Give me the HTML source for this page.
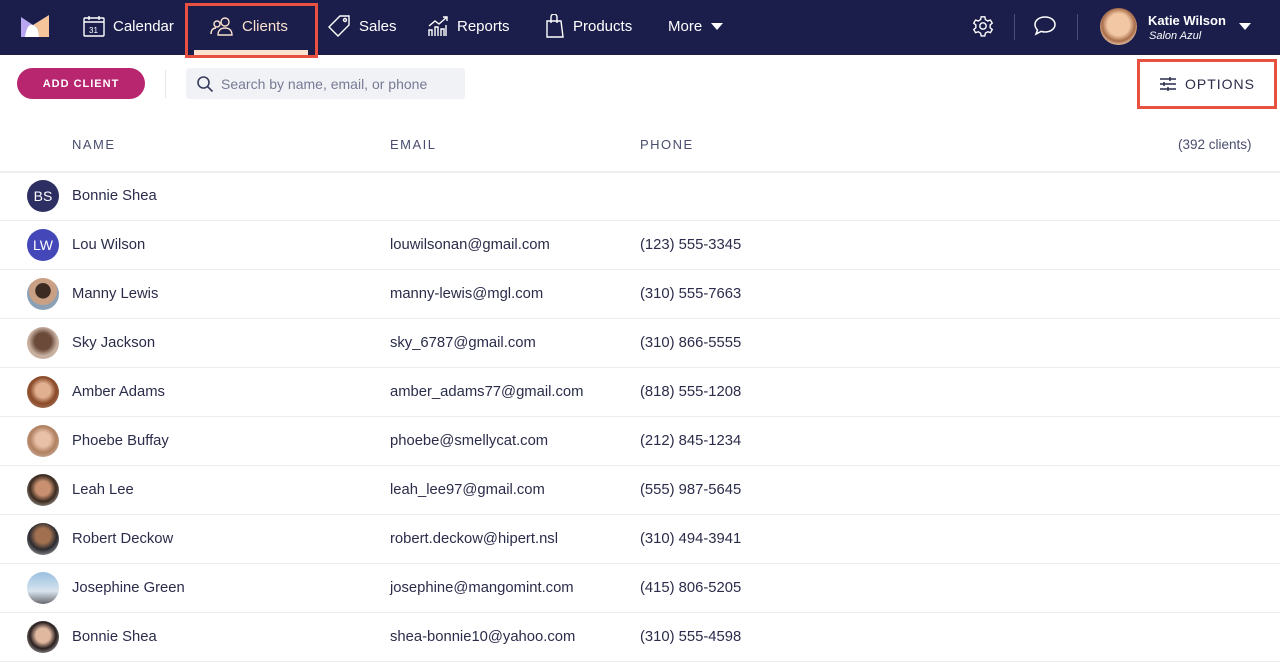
<!DOCTYPE html>
<html><head><meta charset="utf-8"><style>
*{box-sizing:border-box;margin:0;padding:0}
body{width:1280px;height:648px;overflow:hidden;background:#fff;font-family:"Liberation Sans",sans-serif;color:#2a2c4a;position:relative}
.nav{position:absolute;left:0;top:0;width:1280px;height:55px;background:#1b1e4b;color:#fff}
.ni{position:absolute;top:0;height:52px;display:flex;align-items:center;font-size:15px;color:#fff}
.ni svg{margin-right:8px}
.hl{position:absolute;left:185px;top:3px;width:133px;height:55px;border:3px solid #e8503f;z-index:3}
.ul{position:absolute;left:194px;top:50px;width:114px;height:5px;background:#fbe2cf}
.tb{position:absolute;top:68px}
.btn{left:17px;width:128px;height:31px;border-radius:16px;background:#b8266f;color:#fff;font-size:11px;font-weight:bold;letter-spacing:1px;display:flex;align-items:center;justify-content:center}
.search{left:186px;width:279px;height:31px;background:#f1f2f6;border-radius:3px;display:flex;align-items:center;padding-left:10px;font-size:14px;color:#777a94}
.opt{position:absolute;left:1137px;top:59px;width:140px;height:50px;border:3px solid #e8503f;display:flex;align-items:center;justify-content:center;font-size:14px;letter-spacing:1px;color:#2a2c4a}
.th{position:absolute;top:137px;font-size:13px;letter-spacing:1.5px;color:#4a4d6e}
.hr{position:absolute;left:0;top:171px;width:1280px;height:2px;background:#eeeef0}
.row{position:absolute;left:0;width:1280px;height:49px;border-bottom:1px solid #ececef;font-size:14.8px}
.row div{position:absolute;top:0;line-height:48px}
.av{position:absolute;left:27px;top:8px;width:32px;height:32px;border-radius:50%;color:#fff;font-size:14px;display:flex;align-items:center;justify-content:center}
</style></head><body>
<div class="nav">
 <div class="ni" style="left:21px"><svg width="28" height="22" viewBox="0 0 28 22"><path d="M0 2 L12 10 L12 22 L0 22Z" fill="#b9a6f0"/><path d="M12 10 L28 0 L28 22 L18 22 Q18 12 12 10Z" fill="#f6c49a"/><path d="M4 22 Q6 8 12 10 Q18 12 18 22Z" fill="#fff"/></svg></div>
 <div class="ni" style="left:83px"><svg width="22" height="22" viewBox="0 0 22 22" fill="none" stroke="#fff" stroke-width="1.4"><rect x="1" y="3" width="20" height="18" rx="1"/><path d="M1 7h20M6 1v4M16 1v4"/><text x="6" y="18" font-size="8" fill="#fff" stroke="none">31</text></svg>Calendar</div>
 <div class="ni" style="left:210px;color:#fbe2cf"><svg width="24" height="20" viewBox="0 0 24 20" fill="none" stroke="#fbe2cf" stroke-width="1.4"><circle cx="15" cy="6" r="4"/><path d="M8 19c0-5 3-7 7-7s7 2 7 7z"/><circle cx="7" cy="8" r="3"/><path d="M1 18c0-4 2-6 5-6"/></svg>Clients</div>
 <div class="ni" style="left:327px"><svg width="24" height="22" viewBox="0 0 24 22" fill="none" stroke="#fff" stroke-width="1.4"><path d="M13 1h9v9L11 21 2 12z"/><circle cx="18" cy="5" r="1.5"/></svg>Sales</div>
 <div class="ni" style="left:427px"><svg width="22" height="22" viewBox="0 0 22 22" fill="none" stroke="#fff" stroke-width="1.4"><path d="M2 21v-6h3v6M8 21v-9h3v9M14 21v-7h3v7M19 21v-11"/><path d="M2 11l6-5 4 3 8-7M16 2h4v4"/></svg>Reports</div>
 <div class="ni" style="left:545px"><svg width="20" height="24" viewBox="0 0 20 24" fill="none" stroke="#fff" stroke-width="1.4"><path d="M2 7h14l2 16H2z"/><path d="M6 9V3a3 3 0 0 1 6 0v6"/></svg>Products</div>
 <div class="ni" style="left:668px">More <span style="margin-left:9px;border-left:6px solid transparent;border-right:6px solid transparent;border-top:7px solid #fff"></span></div>
 <div class="ni" style="left:972px"><svg width="22" height="22" viewBox="0 0 24 24" fill="none" stroke="#fff" stroke-width="1.5"><circle cx="12" cy="12" r="3.5"/><path d="M10 2h4l.6 3 2.6 1.5 2.9-1 2 3.4-2.3 2v3l2.3 2-2 3.4-2.9-1-2.6 1.5-.6 3h-4l-.6-3-2.6-1.5-2.9 1-2-3.4 2.3-2v-3l-2.3-2 2-3.4 2.9 1L9.4 5z"/></svg></div>
 <div style="position:absolute;left:1014px;top:14px;width:1px;height:26px;background:#4a4d75"></div>
 <div class="ni" style="left:1033px"><svg width="24" height="22" viewBox="0 0 24 22" fill="none" stroke="#fff" stroke-width="1.5"><path d="M12 2c6 0 10 3.5 10 7.5S18 17 12 17c-1.5 0-3-.3-4-.6L3 19l1.5-4C3 13.5 2 11.5 2 9.5 2 5.5 6 2 12 2z"/></svg></div>
 <div style="position:absolute;left:1077px;top:14px;width:1px;height:26px;background:#4a4d75"></div>
 <div style="position:absolute;left:1100px;top:8px;width:37px;height:37px;border-radius:50%;background:radial-gradient(circle at 50% 45%,#f2c7a4 0 40%,#a86d4a 60%,#e9c3a6 75%)"></div>
 <div style="position:absolute;left:1148px;top:13px;font-size:13px;font-weight:bold">Katie Wilson</div>
 <div style="position:absolute;left:1149px;top:30px;font-size:11px;font-style:italic">Salon Azul</div>
 <div style="position:absolute;left:1239px;top:23px;border-left:6px solid transparent;border-right:6px solid transparent;border-top:7px solid #fff"></div>
</div>
<div class="ul"></div><div class="hl"></div>
<div class="tb btn">ADD CLIENT</div>
<div style="position:absolute;left:165px;top:70px;width:1px;height:28px;background:#e5e5ea"></div>
<div class="tb search"><svg width="18" height="18" viewBox="0 0 18 18" fill="none" stroke="#3a3d5c" stroke-width="1.6" style="margin-right:7px"><circle cx="7.5" cy="7.5" r="5.5"/><path d="M11.5 11.5l5 5"/></svg>Search by name, email, or phone</div>
<div class="opt"><svg width="18" height="16" viewBox="0 0 18 16" fill="none" stroke="#2a2c4a" stroke-width="1.5" style="margin-right:8px"><path d="M1 3h16M1 8h16M1 13h16"/><path d="M11 1v4M5 6v4M9 11v4"/></svg>OPTIONS</div>
<div class="th" style="left:72px">NAME</div>
<div class="th" style="left:390px">EMAIL</div>
<div class="th" style="left:640px">PHONE</div>
<div class="th" style="left:1178px;letter-spacing:0;font-size:13.5px">(392 clients)</div>
<div class="hr"></div>
<div class="row" style="top:172px"><span class="av" style="background:#2d2f62">BS</span><div style="left:72px">Bonnie Shea</div></div>
<div class="row" style="top:221px"><span class="av" style="background:#4347b8">LW</span><div style="left:72px">Lou Wilson</div><div style="left:390px">louwilsonan@gmail.com</div><div style="left:640px">(123) 555-3345</div></div>
<div class="row" style="top:270px"><span class="av" style="background:radial-gradient(circle at 50% 40%,#3b2a22 0 30%,#c9a084 32% 55%,#8ba0b5 58%)"></span><div style="left:72px">Manny Lewis</div><div style="left:390px">manny-lewis@mgl.com</div><div style="left:640px">(310) 555-7663</div></div>
<div class="row" style="top:319px"><span class="av" style="background:radial-gradient(circle at 50% 45%,#6b4a3a 0 35%,#c8b0a0 60%)"></span><div style="left:72px">Sky Jackson</div><div style="left:390px">sky_6787@gmail.com</div><div style="left:640px">(310) 866-5555</div></div>
<div class="row" style="top:368px"><span class="av" style="background:radial-gradient(circle at 50% 45%,#e0b090 0 30%,#8a4a2a 55%,#b08a70)"></span><div style="left:72px">Amber Adams</div><div style="left:390px">amber_adams77@gmail.com</div><div style="left:640px">(818) 555-1208</div></div>
<div class="row" style="top:417px"><span class="av" style="background:radial-gradient(circle at 50% 45%,#e8c0a8 0 30%,#b08060 55%,#d8c8c0)"></span><div style="left:72px">Phoebe Buffay</div><div style="left:390px">phoebe@smellycat.com</div><div style="left:640px">(212) 845-1234</div></div>
<div class="row" style="top:466px"><span class="av" style="background:radial-gradient(circle at 50% 45%,#c89070 0 30%,#3a2a20 55%,#e0e0d8)"></span><div style="left:72px">Leah Lee</div><div style="left:390px">leah_lee97@gmail.com</div><div style="left:640px">(555) 987-5645</div></div>
<div class="row" style="top:515px"><span class="av" style="background:radial-gradient(circle at 50% 40%,#a07050 0 30%,#2a2a30 55%,#d0d0d0)"></span><div style="left:72px">Robert Deckow</div><div style="left:390px">robert.deckow@hipert.nsl</div><div style="left:640px">(310) 494-3941</div></div>
<div class="row" style="top:564px"><span class="av" style="background:linear-gradient(#9ac0e0,#d8e4ee 60%,#6a6a70)"></span><div style="left:72px">Josephine Green</div><div style="left:390px">josephine@mangomint.com</div><div style="left:640px">(415) 806-5205</div></div>
<div class="row" style="top:613px"><span class="av" style="background:radial-gradient(circle at 50% 45%,#e0b8a0 0 30%,#2a2020 55%,#e8e8e8)"></span><div style="left:72px">Bonnie Shea</div><div style="left:390px">shea-bonnie10@yahoo.com</div><div style="left:640px">(310) 555-4598</div></div>
</body></html>
